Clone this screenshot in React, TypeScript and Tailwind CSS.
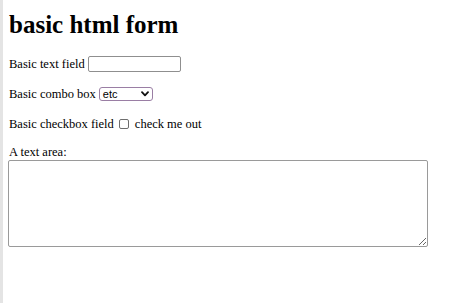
import React from "react";

export default function App() {
  return (
    <div className="flex w-[474px] h-[303px] bg-white overflow-hidden" style={{ fontFamily: '"Liberation Serif", serif' }}>
      <div className="w-[3px] shrink-0 bg-[#e4e4e4]" />
      <div className="flex flex-col pl-[5px] text-[12.5px] leading-[16px] text-black">
        <h1 className="mt-[10px] text-[25px] leading-[29px] font-bold pl-[1px]">basic html form</h1>

        <div className="mt-[17px] flex items-center h-[16px] pl-[1px]">
          <span>Basic text field</span>
          <input type="text" className="ml-[3px] w-[93px] h-[16px] border border-[#8f8f8f] rounded-[2px] bg-white outline-none" />
        </div>

        <div className="mt-[15px] flex items-center h-[14px] pl-[1px]">
          <span>Basic combo box</span>
          <div className="ml-[3px] w-[54px] h-[14px] border border-[#9a7ea4] rounded-[3px] flex items-center justify-between pl-[3px] pr-[3px]">
            <span className="text-[11px] leading-[12px]" style={{ fontFamily: '"Liberation Sans", Arial, sans-serif' }}>etc</span>
            <svg width="8" height="6" viewBox="0 0 8 6">
              <path d="M1 1.2 L4 4.4 L7 1.2" fill="none" stroke="#111" strokeWidth="1.8" strokeLinecap="round" strokeLinejoin="round" />
            </svg>
          </div>
        </div>

        <div className="mt-[15px] flex items-center h-[16px] pl-[1px]">
          <span>Basic checkbox field</span>
          <div className="ml-[5px] w-[10px] h-[10px] border border-[#6e6e6e] rounded-[2px] bg-white" />
          <span className="ml-[6px]">check me out</span>
        </div>

        <div className="mt-[13px] leading-[15px] pl-[1px]">A text area:</div>
        <textarea className="w-[420px] h-[87px] border border-[#9a9a9a] rounded-[2px] bg-white outline-none" />
      </div>
    </div>
  );
}
